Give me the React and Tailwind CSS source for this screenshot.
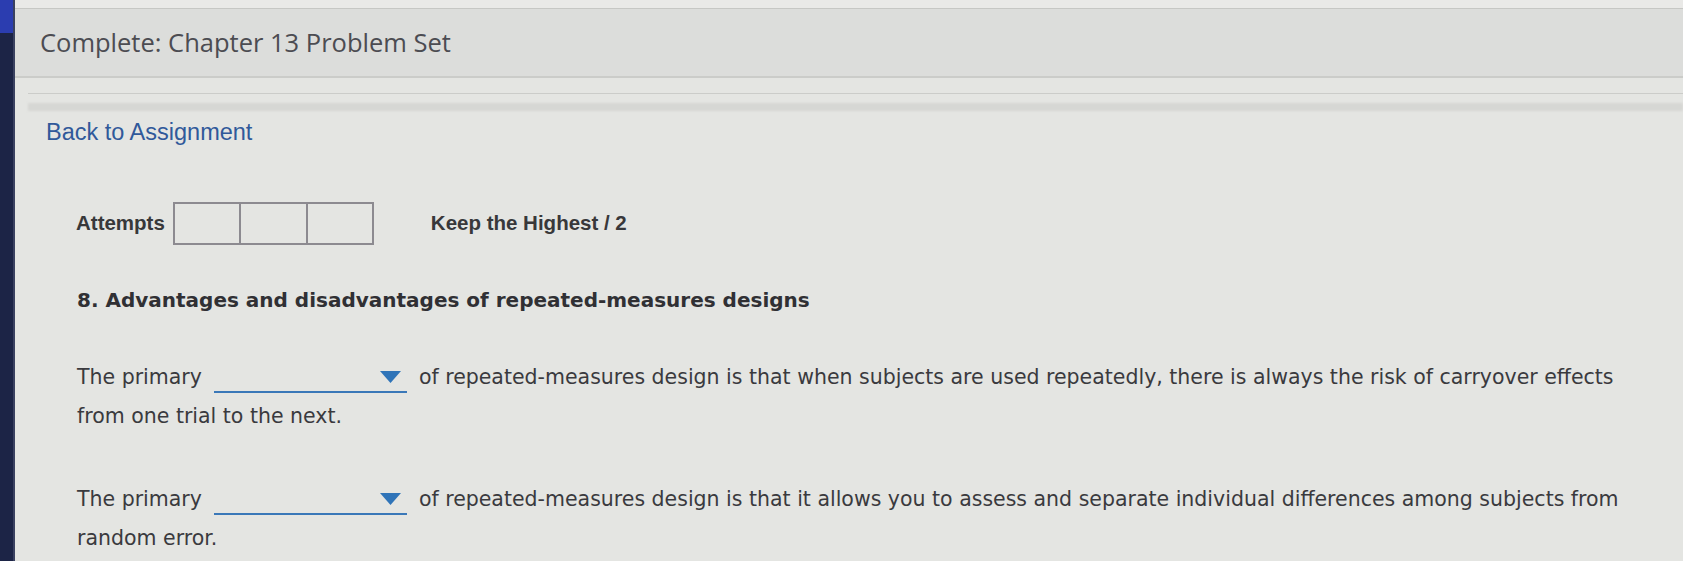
import React from "react";

function Blank() {
  return (
    <span className="relative mx-[12px] inline-block h-[39px] w-[193px] align-top">
      <span className="absolute bottom-[4px] left-0 right-0 h-[2px] bg-[#3a78b8]" />
      <svg
        className="absolute right-[6px] top-[13px]"
        width="21"
        height="12"
        viewBox="0 0 21 12"
      >
        <polygon points="0,0 21,0 10.5,12" fill="#2f74b8" />
      </svg>
    </span>
  );
}

export default function App() {
  const body = { fontFamily: '"DejaVu Sans", Verdana, sans-serif' };
  return (
    <div className="flex h-[561px] w-[1683px] overflow-hidden bg-[#e4e5e2]">
      <div className="flex w-[15px] flex-col border-r-2 border-[#3a4160] bg-[#1c2446]">
        <div className="h-[33px] bg-[#2b3db0]" />
      </div>
      <div className="flex flex-1 flex-col">
        <div className="h-[8px] bg-[#e9e9e7]" />
        <div className="h-px bg-[#c6c7c4]" />
        <div className="flex h-[69px] items-center border-b-2 border-[#cbccc9] bg-[#dcdddb] pl-[25px]">
          <h1
            className="text-[25.5px] leading-none text-[#4c4c52]"
            style={{ fontFamily: '"Open Sans", sans-serif' }}
          >
            Complete: Chapter 13 Problem Set
          </h1>
        </div>
        <div className="ml-[13px] mt-[15px] h-px bg-[#cbccc9]" />
        <div className="ml-[13px] mt-[9px] h-[8px] bg-[#d6d7d4] blur-[1px]" />
        <div className="ml-[31px] mt-[6px] h-[30px] leading-[30px]">
          <a
            className="text-[23.5px] text-[#30599a]"
            style={{ fontFamily: '"Liberation Sans", Arial, sans-serif' }}
          >
            Back to Assignment
          </a>
        </div>
        <div
          className="ml-[61px] mt-[55px] flex h-[43px] items-center text-[20.5px] font-bold text-[#38383a]"
          style={{ fontFamily: '"Liberation Sans", Arial, sans-serif' }}
        >
          <span>Attempts</span>
          <div className="ml-[8px] flex h-[43px] w-[201px] border-2 border-[#8c8a90]">
            <div className="flex-1 border-r-2 border-[#8c8a90]" />
            <div className="flex-1 border-r-2 border-[#8c8a90]" />
            <div className="flex-1" />
          </div>
          <span className="ml-[57px]">Keep the Highest / 2</span>
        </div>
        <div
          className="ml-[62px] mt-[40px] h-[30px] text-[20px] font-bold leading-[30px] text-[#303034]"
          style={body}
        >
          8. Advantages and disadvantages of repeated-measures designs
        </div>
        <p
          className="ml-[62px] mt-[43px] text-[20.5px] leading-[39px] text-[#3a3a3e]"
          style={body}
        >
          The primary
          <Blank />
          of repeated-measures design is that when subjects are used repeatedly, there is always the risk of carryover effects
          <br />
          from one trial to the next.
        </p>
        <p
          className="ml-[62px] mt-[44px] text-[20.5px] leading-[39px] text-[#3a3a3e]"
          style={body}
        >
          The primary
          <Blank />
          of repeated-measures design is that it allows you to assess and separate individual differences among subjects from
          <br />
          random error.
        </p>
      </div>
    </div>
  );
}
